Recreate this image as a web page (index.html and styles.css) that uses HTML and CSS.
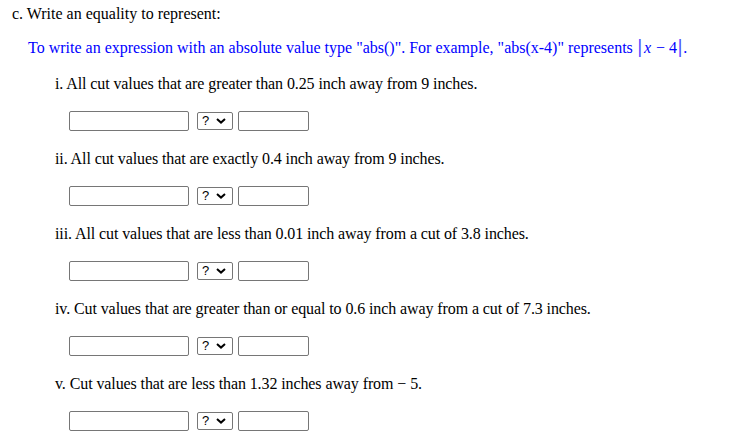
FILE: index.html
```html
<!DOCTYPE html>
<html>
<head>
<meta charset="utf-8">
<link rel="stylesheet" href="styles.css">
</head>
<body>
<div class="page">
  <p class="head">c. Write an equality to represent:</p>
  <p class="hint">To write an expression with an absolute value type "abs()". For example, "abs(x-4)" represents <span class="math"><span class="bar">|</span><i class="var">x</i><span class="op">−</span>4<span class="bar">|</span></span>.</p>

  <div class="item">
    <p class="q">i. All cut values that are greater than 0.25 inch away from 9 inches.</p>
    <div class="answer"><input class="lhs" type="text"><div class="sel"><span class="qm">?</span><svg width="10" height="6" viewBox="0 0 10 6"><path d="M1 1 L5 4.6 L9 1" fill="none" stroke="#000" stroke-width="2"/></svg></div><input class="rhs" type="text"></div>
  </div>
  <div class="item">
    <p class="q">ii. All cut values that are exactly 0.4 inch away from 9 inches.</p>
    <div class="answer"><input class="lhs" type="text"><div class="sel"><span class="qm">?</span><svg width="10" height="6" viewBox="0 0 10 6"><path d="M1 1 L5 4.6 L9 1" fill="none" stroke="#000" stroke-width="2"/></svg></div><input class="rhs" type="text"></div>
  </div>
  <div class="item">
    <p class="q">iii. All cut values that are less than 0.01 inch away from a cut of 3.8 inches.</p>
    <div class="answer"><input class="lhs" type="text"><div class="sel"><span class="qm">?</span><svg width="10" height="6" viewBox="0 0 10 6"><path d="M1 1 L5 4.6 L9 1" fill="none" stroke="#000" stroke-width="2"/></svg></div><input class="rhs" type="text"></div>
  </div>
  <div class="item">
    <p class="q">iv. Cut values that are greater than or equal to 0.6 inch away from a cut of 7.3 inches.</p>
    <div class="answer"><input class="lhs" type="text"><div class="sel"><span class="qm">?</span><svg width="10" height="6" viewBox="0 0 10 6"><path d="M1 1 L5 4.6 L9 1" fill="none" stroke="#000" stroke-width="2"/></svg></div><input class="rhs" type="text"></div>
  </div>
  <div class="item">
    <p class="q">v. Cut values that are less than 1.32 inches away from <span class="neg">−</span>5.</p>
    <div class="answer"><input class="lhs" type="text"><div class="sel"><span class="qm">?</span><svg width="10" height="6" viewBox="0 0 10 6"><path d="M1 1 L5 4.6 L9 1" fill="none" stroke="#000" stroke-width="2"/></svg></div><input class="rhs" type="text"></div>
  </div>
</div>
</body>
</html>
```
FILE: styles.css
```css
html, body {
  margin: 0;
  padding: 0;
  background: #fff;
}
body, .page, .page p {
  font-family: "Liberation Serif", serif;
}
.page {
  font-size: 16px;
  color: #000;
  padding: 5px 0 0 12px;
}
.page p {
  margin: 0;
  line-height: 18px;
}
.page .head {
  margin-bottom: 16px;
}
.page .hint {
  color: #0000ff;
  padding-left: 16px;
  margin-bottom: 18px;
}
.math {
  line-height: 0;
}
.var {
  font-family: "Liberation Serif", serif;
  font-style: italic;
  padding: 0 1px;
}
.op {
  padding: 0 4px;
}
.bar {
  font-size: 18px;
  color: #4f4fff;
  font-family: "DejaVu Sans", sans-serif;
}
.item {
  padding-left: 43px;
  height: 75px;
}
.item .q {
  letter-spacing: -0.1px;
}
.answer {
  display: flex;
  align-items: center;
  margin-top: 18px;
  margin-left: 14px;
}
input {
  box-sizing: border-box;
  border: 1px solid #767676;
  border-radius: 2px;
  height: 20px;
  padding: 0 2px;
  margin: 0;
  background: #fff;
}
.lhs {
  width: 120px;
  margin-right: 8px;
}
.rhs {
  width: 71px;
  margin-left: 5px;
}
.sel {
  box-sizing: border-box;
  width: 36px;
  height: 18px;
  border: 1px solid #767676;
  border-radius: 2px;
  display: flex;
  align-items: center;
  padding-left: 4px;
  gap: 7px;
}
.qm {
  font-family: "Liberation Sans", Arial, sans-serif;
  font-size: 13px;
  line-height: 16px;
}
.neg {
  margin-right: 4px;
}
```
